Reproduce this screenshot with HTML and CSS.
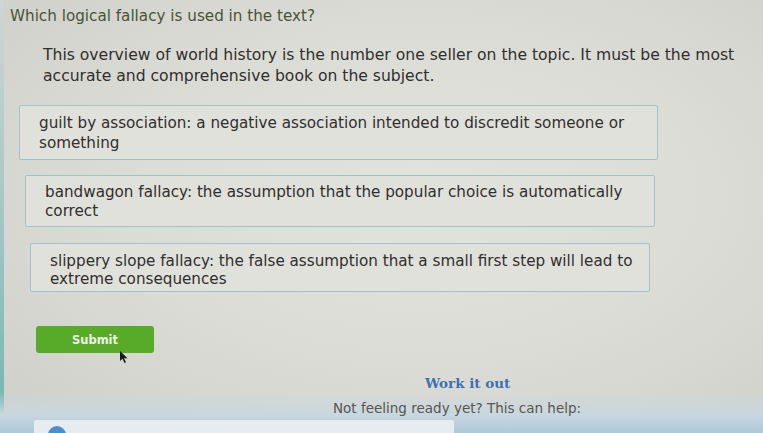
FILE: index.html
```html
<!DOCTYPE html>
<html>
<head>
<meta charset="utf-8">
<link rel="stylesheet" href="styles.css">
</head>
<body>
<div class="screen">
  <div class="bezel"></div>
  <main class="content">
    <h1 class="question">Which logical fallacy is used in the text?</h1>
    <p class="passage">This overview of world history is the number one seller on the topic. It must be the most accurate and comprehensive book on the subject.</p>
    <div class="choices">
      <div class="choice choice-1">guilt by association: a negative association intended to discredit someone or something</div>
      <div class="choice choice-2">bandwagon fallacy: the assumption that the popular choice is automatically correct</div>
      <div class="choice choice-3">slippery slope fallacy: the false assumption that a small first step will lead to extreme consequences</div>
    </div>
    <div class="submit-row">
      <button class="submit">Submit</button>
      <svg class="cursor" width="10" height="14" viewBox="0 0 10 14"><path d="M1 1 L1 11 L3.5 8.8 L5.5 13 L7 12.3 L5 8.2 L8.5 8.2 Z" fill="#1a1a1a"/></svg>
    </div>
    <div class="band">
      <div class="card"><span class="dot"></span></div>
    </div>
    <section class="help">
      <h2 class="work">Work it out</h2>
      <p class="ready">Not feeling ready yet? This can help:</p>
    </section>
  </main>
</div>
</body>
</html>
```
FILE: styles.css
```css
html, body {
  margin: 0;
  padding: 0;
  width: 763px;
  height: 433px;
  overflow: hidden;
}
body {
  font-family: "DejaVu Sans", Verdana, sans-serif;
  background: #d9d9d4;
}
.screen {
  display: flex;
  width: 763px;
  height: 433px;
  background: radial-gradient(ellipse at 55% 45%, #e3e3de 0%, #dcdcd6 50%, #cfcfca 100%);
}
.bezel {
  width: 4px;
  flex: none;
  background: linear-gradient(180deg, #d0d6d4 0%, #9fc5c2 55%, #6fb5b0 100%);
}
.content {
  flex: 1;
  padding: 6px 0 0 6px;
  position: relative;
}
.question {
  margin: 0;
  font-size: 15.2px;
  font-weight: normal;
  color: #4a5238;
  line-height: 20px;
}
.passage {
  margin: 19px 0 0 33px;
  width: 715px;
  font-size: 15.6px;
  line-height: 21px;
  color: #2f2f2c;
}
.choices {
  margin-top: 18px;
  display: flex;
  flex-direction: column;
}
.choice {
  box-sizing: border-box;
  border: 1.5px solid #9cc4ca;
  border-radius: 2px;
  background: #e1e1dc;
  font-size: 15.2px;
  color: #2f2f2c;
  padding-right: 8px;
}
.choice-1 {
  margin-left: 9px;
  width: 639px;
  height: 55px;
  line-height: 20px;
  padding-top: 6.5px;
  padding-left: 19px;
}
.choice-2 {
  margin-top: 15px;
  margin-left: 15px;
  width: 630px;
  height: 52px;
  line-height: 19px;
  padding-top: 7px;
  padding-left: 19px;
}
.choice-3 {
  margin-top: 16px;
  margin-left: 20px;
  width: 620px;
  height: 49px;
  line-height: 18px;
  padding-top: 8px;
  padding-left: 19px;
}
.submit-row {
  margin: 34px 0 0 26px;
  display: flex;
  align-items: flex-start;
}
.submit {
  width: 118px;
  height: 27px;
  border: none;
  border-radius: 3px;
  background: #58ab28;
  color: #eef5e6;
  font-family: "DejaVu Sans", Verdana, sans-serif;
  font-weight: bold;
  font-size: 11.5px;
  padding: 0;
}
.cursor {
  margin: 24px 0 0 -35px;
}
.help {
  position: relative;
  z-index: 1;
  margin-left: 323px;
  margin-top: 9px;
  display: flex;
  flex-direction: column;
}
.work {
  margin: 0 0 0 92px;
  font-family: "DejaVu Serif", Georgia, serif;
  font-size: 13.5px;
  font-weight: bold;
  color: #3e70b4;
  line-height: 20px;
}
.ready {
  margin: 6px 0 0 0;
  font-size: 13.5px;
  color: #565652;
  line-height: 18px;
}
.band {
  position: absolute;
  left: -4px;
  right: 0;
  top: 392px;
  height: 45px;
  background: linear-gradient(180deg, rgba(200,214,222,0) 0%, #c9d7de 50%, #a8c6d8 100%);
}
.card {
  position: absolute;
  left: 34px;
  top: 28px;
  width: 420px;
  height: 20px;
  background: #e6ecef;
  border-radius: 2px;
}
.dot {
  position: absolute;
  left: 14px;
  top: 6px;
  width: 18px;
  height: 18px;
  border-radius: 50%;
  background: #4a8fd0;
}
```
